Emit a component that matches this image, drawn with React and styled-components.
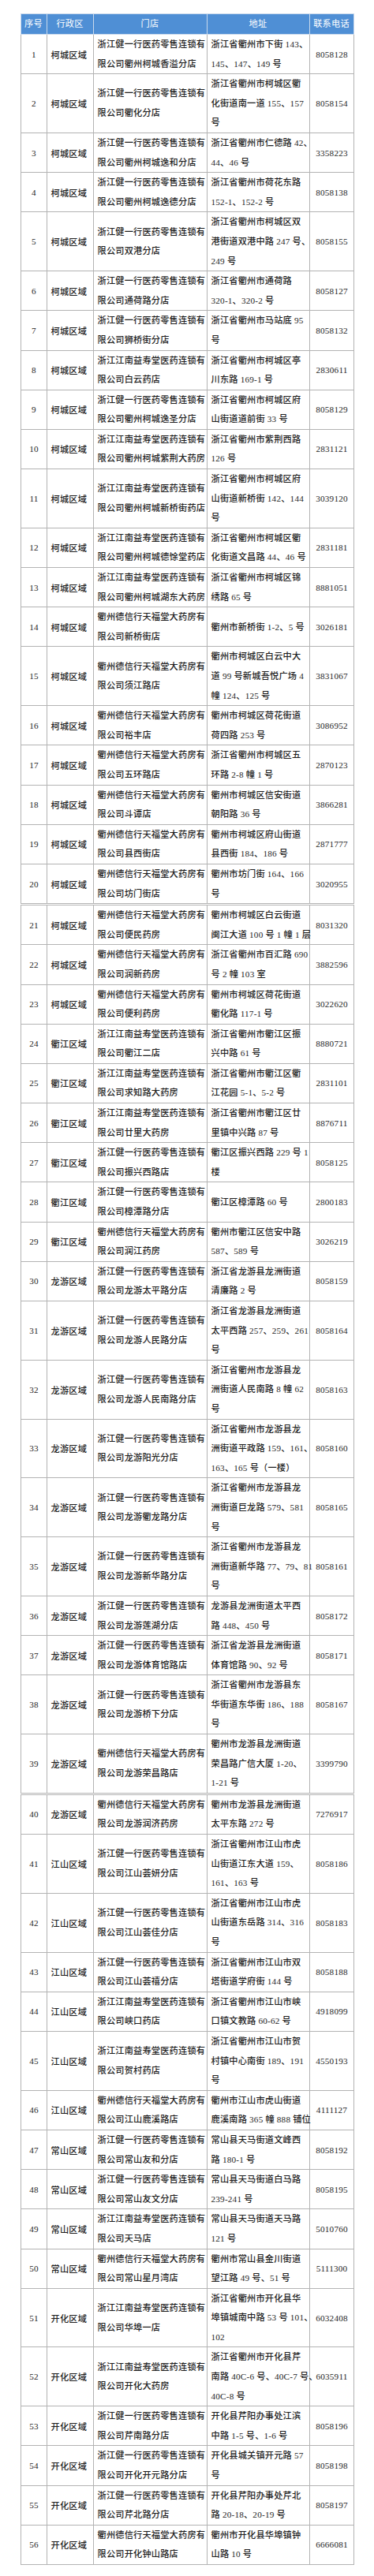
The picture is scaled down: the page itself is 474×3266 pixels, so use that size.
import React from "react";
import styled, { createGlobalStyle } from "styled-components";

const GlobalStyle = createGlobalStyle`
  html, body { margin: 0; padding: 0; background: #ffffff; }
  body { font-family: "Liberation Serif", "Noto Sans CJK SC", serif; }
`;

const Page = styled.main`
  display: flex;
  flex-direction: column;
  align-items: center;
  gap: 1px;
  padding: 17px 0 18px;
  width: 474px;
  box-sizing: border-box;
`;

const Table = styled.table`
  width: 422px;
  table-layout: fixed;
  border-collapse: collapse;
  border: 1px solid #b3b3b3;
  font-family: "Liberation Serif", "Noto Sans CJK SC", serif;
  font-size: 11.2px;
  color: #1e1e1e;
`;

const Col = styled.col`
  width: ${(p) => p.$w}px;
`;

const HeadCell = styled.th`
  background: #4f8fd5;
  color: #ffffff;
  font-weight: normal;
  height: 25px;
  line-height: 25px;
  padding: 0;
  text-align: center;
  border: 1px solid #c9d9ec;
  letter-spacing: 0.2px;
`;

const Cell = styled.td`
  border: 1px solid #b3b3b3;
  padding: 0 4px 0 5px;
  vertical-align: middle;
  text-align: ${(p) => p.$align || "left"};
  letter-spacing: 0.2px;
  white-space: nowrap;
  font-weight: 500;
`;

const Line = styled.span`
  display: block;
  line-height: 24.6px;
`;

const COLS = [33, 59, 144, 130, 56];

const DATA = [
  ["柯城区域", "浙江健一行医药零售连锁有限公司衢州柯城香溢分店", "浙江省衢州市下街 143、|145、147、149 号", "8058128"],
  ["柯城区域", "浙江健一行医药零售连锁有限公司衢化分店", "浙江省衢州市柯城区衢|化街道南一道 155、157|号", "8058154"],
  ["柯城区域", "浙江健一行医药零售连锁有限公司衢州柯城逸和分店", "浙江省衢州市仁德路 42、|44、46 号", "3358223"],
  ["柯城区域", "浙江健一行医药零售连锁有限公司衢州柯城逸德分店", "浙江省衢州市荷花东路|152-1、152-2 号", "8058138"],
  ["柯城区域", "浙江健一行医药零售连锁有限公司双港分店", "浙江省衢州市柯城区双|港街道双港中路 247 号、|249 号", "8058155"],
  ["柯城区域", "浙江健一行医药零售连锁有限公司通荷路分店", "浙江省衢州市通荷路|320-1、320-2 号", "8058127"],
  ["柯城区域", "浙江健一行医药零售连锁有限公司狮桥街分店", "浙江省衢州市马站底 95|号", "8058132"],
  ["柯城区域", "浙江江南益寿堂医药连锁有限公司白云药店", "浙江省衢州市柯城区亭|川东路 169-1 号", "2830611"],
  ["柯城区域", "浙江健一行医药零售连锁有限公司衢州柯城逸圣分店", "浙江省衢州市柯城区府|山街道道前街 33 号", "8058129"],
  ["柯城区域", "浙江江南益寿堂医药连锁有限公司衢州柯城紫荆大药房", "浙江省衢州市紫荆西路|126 号", "2831121"],
  ["柯城区域", "浙江江南益寿堂医药连锁有限公司衢州柯城新桥街药店", "浙江省衢州市柯城区府|山街道新桥街 142、144|号", "3039120"],
  ["柯城区域", "浙江江南益寿堂医药连锁有限公司衢州柯城德馀堂药店", "浙江省衢州市柯城区衢|化街道文昌路 44、46 号", "2831181"],
  ["柯城区域", "浙江江南益寿堂医药连锁有限公司衢州柯城湖东大药房", "浙江省衢州市柯城区锦|绣路 65 号", "8881051"],
  ["柯城区域", "衢州德信行天福堂大药房有限公司新桥街店", "衢州市新桥街 1-2、5 号", "3026181"],
  ["柯城区域", "衢州德信行天福堂大药房有限公司须江路店", "衢州市柯城区白云中大|道 99 号新城吾悦广场 4|幢 124、125 号", "3831067"],
  ["柯城区域", "衢州德信行天福堂大药房有限公司裕丰店", "衢州市柯城区荷花街道|荷四路 253 号", "3086952"],
  ["柯城区域", "衢州德信行天福堂大药房有限公司五环路店", "浙江省衢州市柯城区五|环路 2-8 幢 1 号", "2870123"],
  ["柯城区域", "衢州德信行天福堂大药房有限公司斗谭店", "衢州市柯城区信安街道|朝阳路 36 号", "3866281"],
  ["柯城区域", "衢州德信行天福堂大药房有限公司县西街店", "衢州市柯城区府山街道|县西街 184、186 号", "2871777"],
  ["柯城区域", "衢州德信行天福堂大药房有限公司坊门街店", "衢州市坊门街 164、166|号", "3020955"],
  ["柯城区域", "衢州德信行天福堂大药房有限公司便民药房", "衢州市柯城区白云街道|闽江大道 100 号 1 幢 1 层", "8031320"],
  ["柯城区域", "衢州德信行天福堂大药房有限公司润新药房", "浙江省衢州市百汇路 690|号 2 幢 103 室", "3882596"],
  ["柯城区域", "衢州德信行天福堂大药房有限公司便利药房", "衢州市柯城区荷花街道|衢化路 117-1 号", "3022620"],
  ["衢江区域", "浙江江南益寿堂医药连锁有限公司衢江二店", "浙江省衢州市衢江区振|兴中路 61 号", "8880721"],
  ["衢江区域", "浙江江南益寿堂医药连锁有限公司求知路大药房", "浙江省衢州市衢江区衢|江花园 5-1、5-2 号", "2831101"],
  ["衢江区域", "浙江江南益寿堂医药连锁有限公司廿里大药房", "浙江省衢州市衢江区廿|里镇中兴路 87 号", "8876711"],
  ["衢江区域", "浙江健一行医药零售连锁有限公司振兴西路店", "衢江区振兴西路 229 号 1|楼", "8058125"],
  ["衢江区域", "浙江健一行医药零售连锁有限公司樟潭路分店", "衢江区樟潭路 60 号", "2800183"],
  ["衢江区域", "衢州德信行天福堂大药房有限公司润江药房", "衢州市衢江区信安中路|587、589 号", "3026219"],
  ["龙游区域", "浙江健一行医药零售连锁有限公司龙游太平路分店", "浙江省龙游县龙洲街道|清廉路 2 号", "8058159"],
  ["龙游区域", "浙江健一行医药零售连锁有限公司龙游人民路分店", "浙江省龙游县龙洲街道|太平西路 257、259、261|号", "8058164"],
  ["龙游区域", "浙江健一行医药零售连锁有限公司龙游人民南路分店", "浙江省衢州市龙游县龙|洲街道人民南路 8 幢 62|号", "8058163"],
  ["龙游区域", "浙江健一行医药零售连锁有限公司龙游阳光分店", "浙江省衢州市龙游县龙|洲街道平政路 159、161、|163、165 号（一楼）", "8058160"],
  ["龙游区域", "浙江健一行医药零售连锁有限公司龙游衢龙路分店", "浙江省衢州市龙游县龙|洲街道巨龙路 579、581|号", "8058165"],
  ["龙游区域", "浙江健一行医药零售连锁有限公司龙游新华路分店", "浙江省衢州市龙游县龙|洲街道新华路 77、79、81|号", "8058161"],
  ["龙游区域", "浙江健一行医药零售连锁有限公司龙游莲湖分店", "龙游县龙洲街道太平西|路 448、450 号", "8058172"],
  ["龙游区域", "浙江健一行医药零售连锁有限公司龙游体育馆路店", "浙江省龙游县龙洲街道|体育馆路 90、92 号", "8058171"],
  ["龙游区域", "浙江健一行医药零售连锁有限公司龙游桥下分店", "浙江省衢州市龙游县东|华街道东华街 186、188|号", "8058167"],
  ["龙游区域", "衢州德信行天福堂大药房有限公司龙游荣昌路店", "衢州市龙游县龙洲街道|荣昌路广信大厦 1-20、|1-21 号", "3399790"],
  ["龙游区域", "衢州德信行天福堂大药房有限公司龙游润济药房", "衢州市龙游县龙洲街道|太平东路 272 号", "7276917"],
  ["江山区域", "浙江健一行医药零售连锁有限公司江山荟妍分店", "浙江省衢州市江山市虎|山街道江东大道 159、|161、163 号", "8058186"],
  ["江山区域", "浙江健一行医药零售连锁有限公司江山荟佳分店", "浙江省衢州市江山市虎|山街道东岳路 314、316|号", "8058183"],
  ["江山区域", "浙江健一行医药零售连锁有限公司江山荟禧分店", "浙江省衢州市江山市双|塔街道学府街 144 号", "8058188"],
  ["江山区域", "浙江江南益寿堂医药连锁有限公司峡口药店", "浙江省衢州市江山市峡|口镇文教路 60-62 号", "4918099"],
  ["江山区域", "浙江江南益寿堂医药连锁有限公司贺村药店", "浙江省衢州市江山市贺|村镇中心南街 189、191|号", "4550193"],
  ["江山区域", "衢州德信行天福堂大药房有限公司江山鹿溪路店", "衢州市江山市虎山街道|鹿溪南路 365 幢 888 铺位", "4111127"],
  ["常山区域", "浙江健一行医药零售连锁有限公司常山友和分店", "常山县天马街道文峰西|路 180-1 号", "8058192"],
  ["常山区域", "浙江健一行医药零售连锁有限公司常山友文分店", "常山县天马街道白马路|239-241 号", "8058195"],
  ["常山区域", "浙江江南益寿堂医药连锁有限公司天马店", "常山县天马街道天马路|121 号", "5010760"],
  ["常山区域", "衢州德信行天福堂大药房有限公司常山星月湾店", "衢州市常山县金川街道|望江路 49 号、51 号", "5111300"],
  ["开化区域", "浙江江南益寿堂医药连锁有限公司华埠一店", "浙江省衢州市开化县华|埠镇城南中路 53 号 101、|102", "6032408"],
  ["开化区域", "浙江江南益寿堂医药连锁有限公司开化大药房", "浙江省衢州市开化县芹|南路 40C-6 号、40C-7 号、|40C-8 号", "6035911"],
  ["开化区域", "浙江健一行医药零售连锁有限公司芹南路分店", "开化县芹阳办事处江滨|中路 1-5 号、1-6 号", "8058196"],
  ["开化区域", "浙江健一行医药零售连锁有限公司开化开元路分店", "开化县城关镇开元路 57|号", "8058198"],
  ["开化区域", "浙江健一行医药零售连锁有限公司芹北路分店", "开化县芹阳办事处芹北|路 20-18、20-19 号", "8058197"],
  ["开化区域", "衢州德信行天福堂大药房有限公司开化钟山路店", "衢州市开化县华埠镇钟|山路 10 号", "6666081"],
];

const GROUPS = [
  [0, 20],
  [20, 39],
  [39, 56],
];

function Lines({ items }) {
  return items.map((t, i) => <Line key={i}>{t}</Line>);
}

function Row({ index, row }) {
  const [region, store, address, phone] = row;
  const storeLines = [store.slice(0, 12), store.slice(12)].filter(Boolean);
  return (
    <tr>
      <Cell $align="center">{index + 1}</Cell>
      <Cell>{region}</Cell>
      <Cell>
        <Lines items={storeLines} />
      </Cell>
      <Cell>
        <Lines items={address.split("|")} />
      </Cell>
      <Cell $align="center">{phone}</Cell>
    </tr>
  );
}

function Cols() {
  return (
    <colgroup>
      {COLS.map((w, i) => (
        <Col key={i} $w={w} />
      ))}
    </colgroup>
  );
}

export default function App() {
  return (
    <>
      <GlobalStyle />
      <Page>
        {GROUPS.map(([from, to], g) => (
          <Table key={g}>
            <Cols />
            {g === 0 && (
              <thead>
                <tr>
                  <HeadCell>序号</HeadCell>
                  <HeadCell>行政区</HeadCell>
                  <HeadCell>门店</HeadCell>
                  <HeadCell>地址</HeadCell>
                  <HeadCell>联系电话</HeadCell>
                </tr>
              </thead>
            )}
            <tbody>
              {DATA.slice(from, to).map((row, i) => (
                <Row key={from + i} index={from + i} row={row} />
              ))}
            </tbody>
          </Table>
        ))}
      </Page>
    </>
  );
}
